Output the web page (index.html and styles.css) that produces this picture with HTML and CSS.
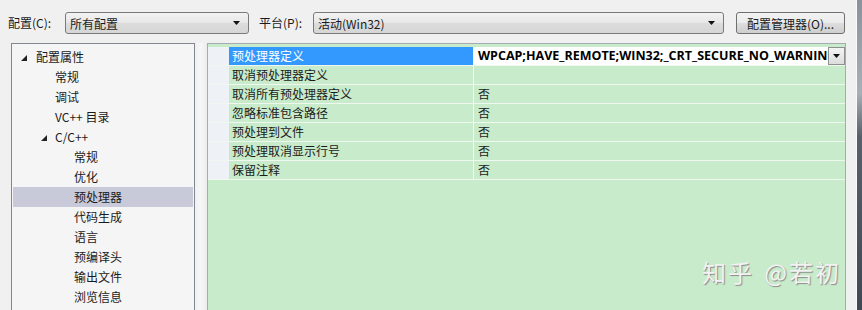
FILE: index.html
```html
<!DOCTYPE html>
<html lang="zh-CN">
<head>
    <meta charset="utf-8">
    <title>属性页</title>
    <link rel="stylesheet" href="styles.css">
</head>
<body>
    <div class="window">
        <div class="main">
            <div class="toolbar">
                <span class="label label-config">配置(C):</span>
                <div class="combo combo-config">
                    <span>所有配置</span>
                    <svg class="combo-arrow" width="8" height="5" viewBox="0 0 8 5"><polygon points="0,0 7,0 3.5,4" fill="#111"/></svg>
                </div>
                <span class="label label-platform">平台(P):</span>
                <div class="combo combo-platform">
                    <span>活动(Win32)</span>
                    <svg class="combo-arrow" width="8" height="5" viewBox="0 0 8 5"><polygon points="0,0 7,0 3.5,4" fill="#111"/></svg>
                </div>
                <button class="btn">配置管理器(O)...</button>
            </div>

            <div class="panes">
                <ul class="tree">
                    <li class="node level-0"><svg class="expander" width="6" height="6" viewBox="0 0 6 6"><polygon points="6,0 6,6 0,6" fill="#222"/></svg>配置属性</li>
                    <li class="node level-1">常规</li>
                    <li class="node level-1">调试</li>
                    <li class="node level-1">VC++ 目录</li>
                    <li class="node level-1 open"><svg class="expander" width="6" height="6" viewBox="0 0 6 6"><polygon points="6,0 6,6 0,6" fill="#222"/></svg>C/C++</li>
                    <li class="node level-2">常规</li>
                    <li class="node level-2">优化</li>
                    <li class="node level-2 selected">预处理器</li>
                    <li class="node level-2">代码生成</li>
                    <li class="node level-2">语言</li>
                    <li class="node level-2">预编译头</li>
                    <li class="node level-2">输出文件</li>
                    <li class="node level-2">浏览信息</li>
                </ul>

                <div class="splitter"></div>

                <div class="grid">
                    <div class="row">
                        <div class="gutter"></div>
                        <div class="name name-selected">预处理器定义</div>
                        <div class="value value-edit">
                            <span class="edit-text">WPCAP;HAVE_REMOTE;WIN32;_CRT_SECURE_NO_WARNIN</span>
                            <span class="drop">
                                <svg width="7" height="4" viewBox="0 0 7 4"><polygon points="0,0 7,0 3.5,4" fill="#111"/></svg>
                            </span>
                        </div>
                    </div>
                    <div class="row">
                        <div class="gutter"></div>
                        <div class="name">取消预处理器定义</div>
                        <div class="value"></div>
                    </div>
                    <div class="row">
                        <div class="gutter"></div>
                        <div class="name">取消所有预处理器定义</div>
                        <div class="value">否</div>
                    </div>
                    <div class="row">
                        <div class="gutter"></div>
                        <div class="name">忽略标准包含路径</div>
                        <div class="value">否</div>
                    </div>
                    <div class="row">
                        <div class="gutter"></div>
                        <div class="name">预处理到文件</div>
                        <div class="value">否</div>
                    </div>
                    <div class="row">
                        <div class="gutter"></div>
                        <div class="name">预处理取消显示行号</div>
                        <div class="value">否</div>
                    </div>
                    <div class="row">
                        <div class="gutter"></div>
                        <div class="name">保留注释</div>
                        <div class="value">否</div>
                    </div>

                    <div class="watermark">知乎 @若初</div>
                </div>
            </div>
        </div>
        <div class="frame"></div>
    </div>
</body>
</html>
```

FILE: styles.css
```css
body{
    margin: 0;
    background-color: #f0f0f0;
    font-family: "Noto Sans CJK SC", "Noto Sans", sans-serif;
    font-size: 12px;
    color: #1b1b1b;
    overflow: hidden;
}
.window{
    display: flex;
    width: 862px;
    height: 310px;
}
.main{
    flex: 1;
    display: flex;
    flex-direction: column;
}
.frame{
    width: 5px;
    border-left: 1px solid #fafafa;
    background: linear-gradient(#87929c 0%, #a7b0b8 30%, #56616b 44%, #3f4953 100%);
}

/* top bar */
.toolbar{
    height: 43px;
    box-sizing: border-box;
    padding: 12px 0 0 8px;
    display: flex;
    align-items: flex-start;
}
.label{
    line-height: 22px;
}
.label-config{
    width: 57px;
}
.label-platform{
    width: 54px;
}
.combo{
    height: 22px;
    box-sizing: border-box;
    border: 1px solid #7a7a7a;
    border-radius: 3px;
    background: linear-gradient(#f3f3f3, #e6e6e6 50%, #dcdcdc 51%, #d6d6d6);
    display: flex;
    align-items: center;
    justify-content: space-between;
    padding: 0 7px 0 4px;
}
.combo-config{
    width: 184px;
    margin-right: 10px;
}
.combo-platform{
    width: 411px;
    margin-right: 12px;
}
.combo-arrow{
    margin-top: 1px;
}
.btn{
    width: 109px;
    height: 22px;
    border: 1px solid #707070;
    border-radius: 3px;
    background: linear-gradient(#f2f2f2, #ebebeb 50%, #dddddd 51%, #cfcfcf);
    font-family: inherit;
    font-size: 12px;
    color: #1b1b1b;
    padding: 0;
}

/* panes */
.panes{
    flex: 1;
    display: flex;
}
.tree{
    list-style: none;
    margin: 0 0 0 11px;
    padding: 3px 0 0 1px;
    width: 184px;
    box-sizing: border-box;
    border: 1px solid #828790;
    border-bottom: none;
    background-color: #f5f5f5;
}
.node{
    height: 20px;
    line-height: 20px;
    position: relative;
    margin-right: 1px;
}
.level-0{
    padding-left: 23px;
}
.level-1{
    padding-left: 42px;
}
.level-2{
    padding-left: 61px;
}
.node .expander{
    position: absolute;
    top: 8px;
    left: 8px;
}
.level-1.open .expander{
    left: 28px;
}
.selected{
    background-color: #c8cad9;
}
.splitter{
    width: 12px;
    background: linear-gradient(90deg, #f0f0f0, #f7f7f7 50%, #ececec);
}

/* property grid */
.grid{
    position: relative;
    width: 639px;
    margin-right: 10px;
    box-sizing: border-box;
    border: 1px solid #a5abb2;
    border-bottom: none;
    background-color: #c8ebcb;
    padding-top: 3px;
    overflow: hidden;
}
.row{
    display: flex;
    height: 19px;
    box-sizing: border-box;
    border-bottom: 1px solid #eef8ef;
}
.gutter{
    width: 21px;
    background-color: #eef2f7;
}
.name{
    width: 245px;
    box-sizing: border-box;
    padding-left: 3px;
    line-height: 18px;
    border-right: 1px solid #f2faf2;
}
.name-selected{
    background-color: #3399ff;
    color: #fff;
}
.value{
    flex: 1;
    padding-left: 4px;
    line-height: 18px;
    overflow: hidden;
}
.value-edit{
    background-color: #fff;
    display: flex;
    padding-right: 0;
}
.edit-text{
    flex: 1;
    font-family: "Open Sans", "Noto Sans", sans-serif;
    font-weight: bold;
    font-size: 12.5px;
    color: #000;
    white-space: nowrap;
}
.drop{
    width: 17px;
    height: 18px;
    box-sizing: border-box;
    border: 1px solid #8e8f8f;
    background: linear-gradient(#f4f4f4, #dcdcdc);
    display: flex;
    align-items: center;
    justify-content: center;
}
.watermark{
    position: absolute;
    right: 4px;
    top: 210px;
    font-size: 24px;
    letter-spacing: 2px;
    word-spacing: 3px;
    color: #f2f2f2;
    text-shadow: 1px 1px 1px #8a8a8a;
    white-space: nowrap;
}
```
